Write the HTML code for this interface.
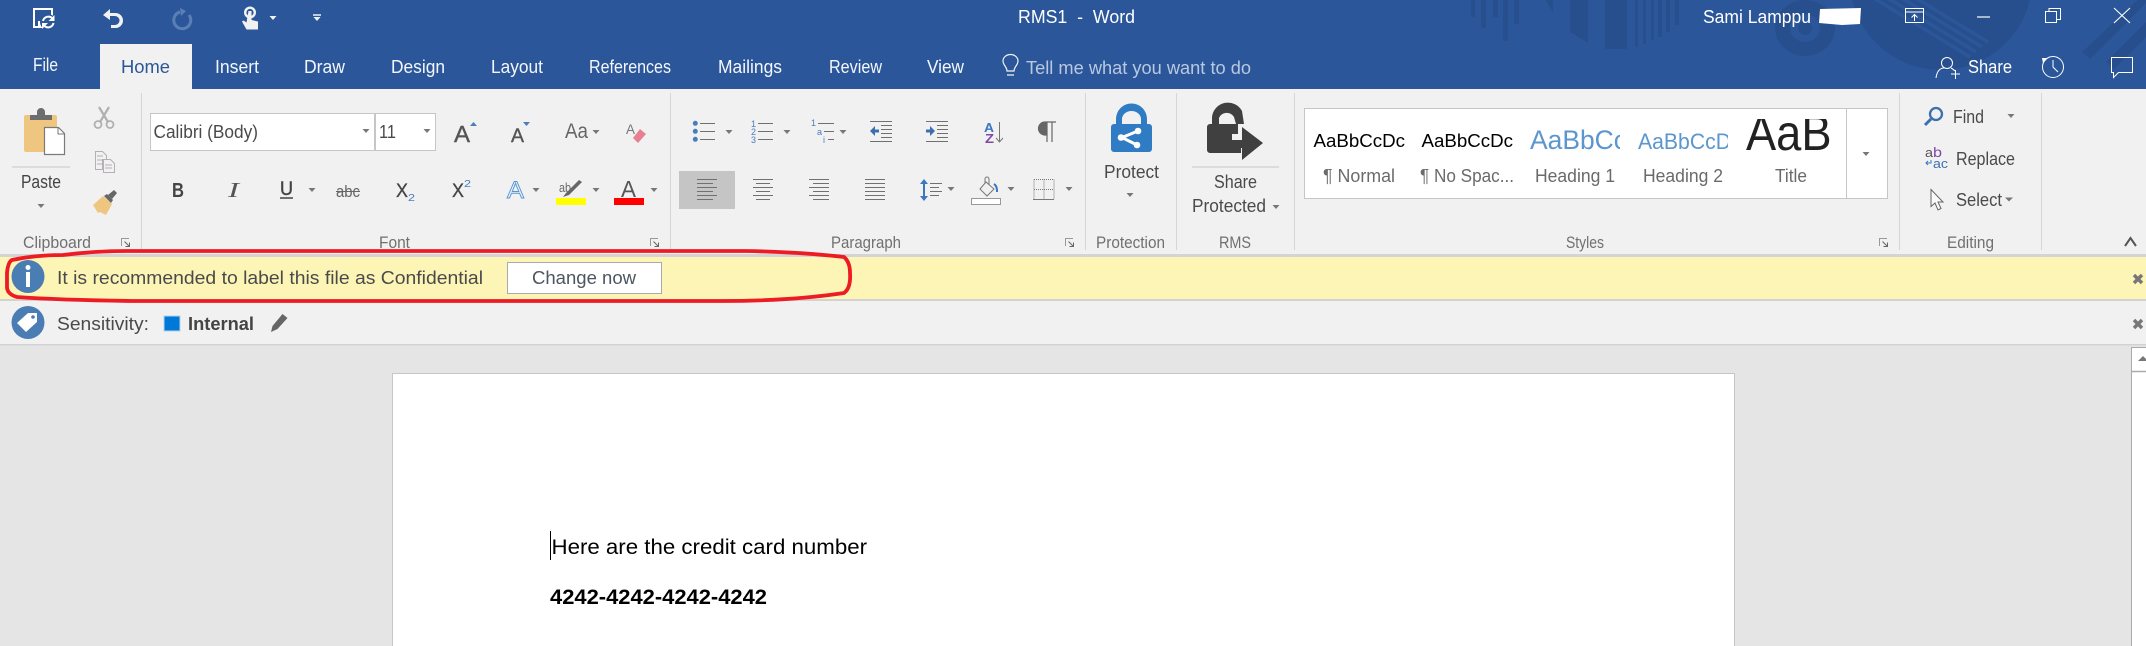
<!DOCTYPE html>
<html lang="en">
<head>
<meta charset="utf-8">
<title>RMS1 - Word</title>
<style>
html,body{margin:0;padding:0;width:2146px;height:646px;overflow:hidden;background:#e5e5e5}
svg{display:block}
text{font-family:"Liberation Sans",sans-serif;font-size:18px;fill:#4a4a4a;white-space:pre}
.w{fill:#fff}
.tab{fill:#f4f6fa}
.g{font-size:16.500px;fill:#707070}
.l{font-size:18px;fill:#6a6a6a}
.d{font-size:21.500px;fill:#000}
.ln{stroke:#707070;stroke-width:1;fill:none}
.bl{fill:#4a7ebb}
</style>
</head>
<body>
<svg xmlns="http://www.w3.org/2000/svg" width="2146" height="646" viewBox="0 0 2146 646">
<defs>
<path id="a" d="M-3.500-2h7L0 2z" fill="#777"/>
<path id="aw" d="M-3.500-2h7L0 2z" fill="#f1f1f1"/>
<g id="dl"><path d="M.5 8V.5H8" stroke="#999" fill="none"/><path d="M3.500 3.500L8 8M8.500 4.500v4h-4" stroke="#666" fill="none"/></g>
<clipPath id="cb"><rect x="0" y="0" width="2146" height="89"/></clipPath>
<clipPath id="cd"><circle cx="1941" cy="-21.600" r="91.600"/></clipPath>
<clipPath id="c1"><rect x="1528" y="112" width="92" height="60"/></clipPath>
<clipPath id="c2"><rect x="1636" y="112" width="92" height="60"/></clipPath>
<clipPath id="c3"><rect x="1740" y="119" width="100" height="50"/></clipPath>
</defs>

<rect width="2146" height="646" fill="#e5e5e5"/>
<!-- title bar -->
<rect width="2146" height="89" fill="#2b579a"/>
<g clip-path="url(#cb)" fill="#274f8d">
<path d="M1471 0h4v17h-4zM1481 0h5v28h-5zM1493 0h5v17h-5zM1503 0h5v41h-5zM1514 0h5v24h-5zM1546 0h7v13z"/>
<path d="M1570 0h18v43l-18-11zM1605 0h22v49h-22zM1635 0h3v47h-3zM1643 0h3v44h-3zM1651 0h3v40h-3zM1658 0h4v37h-4zM1666 0h4v32h-4zM1675 0h4v25h-4z"/>
<path fill-rule="evenodd" d="M1775 28a30 28 0 1 0 60 0a30 28 0 1 0-60 0zM1790 28a15 14 0 1 1 30 0a15 14 0 1 1-30 0z"/>
<circle cx="1805" cy="28" r="7"/>
<circle cx="1941" cy="-21.600" r="91.600"/>
<g clip-path="url(#cd)" stroke="#2b579a" stroke-width="3.500" fill="none">
<path d="M1872-3l98 60M1886-3l90 55M1900-3l82 50M1914-3l74 45"/>
</g>
<path d="M2082 52l8 7 56-56V-8zM2106 62l8 7 32-32V22z"/>
</g>
<!-- QAT -->
<path d="M34 9h18v18H34z" fill="none" stroke="#fff" stroke-width="2"/>
<path d="M38 21h6v6h-6z" fill="#fff"/>
<circle cx="48" cy="22" r="8" fill="#2b579a"/>
<path d="M43 21a5.500 5.500 0 0 1 9.500-2.500M53.500 23a5.500 5.500 0 0 1-9.500 2.500" fill="none" stroke="#fff" stroke-width="2"/>
<path d="M54.500 15v6h-6zM42 29v-6h6z" fill="#fff"/>
<path d="M103 15l7-6v4h5a7.500 7.500 0 0 1 1 15h-5v-3h4a4.500 4.500 0 0 0 0-9h-5v4z" fill="#f1f1f1"/>
<path d="M189 15a8.500 8.500 0 1 1-9-3" fill="none" stroke="#5a7fb6" stroke-width="3"/>
<path d="M180 8l1 8 5-5z" fill="#5a7fb6"/>
<circle cx="250" cy="12.500" r="4.800" fill="none" stroke="#f1f1f1" stroke-width="2.400"/>
<path d="M248.500 11h3v9l6.500 1.500v8h-11.500l-4.500-8 1.500-1 3 2z" fill="#f1f1f1"/>
<use href="#aw" x="273" y="18"/>
<path d="M313 15h8" stroke="#f1f1f1" stroke-width="1.500"/><use href="#aw" x="317" y="19"/>

<!-- title/right -->
<text class="w" x="1018" y="23" textLength="117" lengthAdjust="spacingAndGlyphs">RMS1  -  Word</text>
<text class="w" x="1703" y="23" textLength="108" lengthAdjust="spacingAndGlyphs">Sami Lamppu</text>
<path d="M1820 9l41-1-1 16-18 1-23-2z" fill="#fff"/>
<path d="M1905.500 8.500h18v14h-18zM1905.500 12h18M1914.500 21v-6M1911.500 17.500l3-3 3 3" fill="none" stroke="#fff"/>
<path d="M1977 17h13" stroke="#fff" stroke-width="1.200"/>
<path d="M2045.500 11.500h11v11h-11zM2049 11.500v-3h11.500v11h-4" fill="none" stroke="#fff"/>
<path d="M2114 8l16 15M2130 8l-16 15" stroke="#fff" stroke-width="1.100"/>
<circle cx="1947" cy="63" r="5.500" fill="none" stroke="#fff"/>
<path d="M1936 78c1-8 5-10 8-10M1951 68c2 1 3 2 4 3M1951 74h9M1955.500 70v9" fill="none" stroke="#fff"/>
<text class="w" x="1968" y="73" textLength="44" lengthAdjust="spacingAndGlyphs">Share</text>
<circle cx="2053" cy="67" r="10.500" fill="none" stroke="#fff"/>
<path d="M2053 60v7l5 5" fill="none" stroke="#fff"/><path d="M2042 58h6l-5 5z" fill="#fff"/>
<path d="M2111.500 57.500h21v15h-14l-5 5v-5h-2z" fill="none" stroke="#fff"/>

<!-- tabs -->
<rect x="100" y="44" width="92" height="45" fill="#f1f1f1"/>
<text class="tab" x="33" y="71" textLength="25" lengthAdjust="spacingAndGlyphs">File</text>
<text x="121" y="73" textLength="49" lengthAdjust="spacingAndGlyphs" style="fill:#2b579a">Home</text>
<text class="tab" x="215" y="73" textLength="44" lengthAdjust="spacingAndGlyphs">Insert</text>
<text class="tab" x="304" y="73" textLength="41" lengthAdjust="spacingAndGlyphs">Draw</text>
<text class="tab" x="391" y="73" textLength="54" lengthAdjust="spacingAndGlyphs">Design</text>
<text class="tab" x="491" y="73" textLength="52" lengthAdjust="spacingAndGlyphs">Layout</text>
<text class="tab" x="589" y="73" textLength="82" lengthAdjust="spacingAndGlyphs">References</text>
<text class="tab" x="718" y="73" textLength="64" lengthAdjust="spacingAndGlyphs">Mailings</text>
<text class="tab" x="829" y="73" textLength="53" lengthAdjust="spacingAndGlyphs">Review</text>
<text class="tab" x="927" y="73" textLength="37" lengthAdjust="spacingAndGlyphs">View</text>
<path d="M1007 71c0-4-4-6-4-10a7.500 6.500 0 0 1 15 0c0 4-4 6-4 10zM1007 75h7" fill="none" stroke="#f1f1f1" stroke-width="1.200"/>
<text x="1026" y="74" textLength="225" lengthAdjust="spacingAndGlyphs" style="fill:#b9c8e0">Tell me what you want to do</text>

<!-- ribbon -->
<rect y="89" width="2146" height="165" fill="#f1f1f1"/>
<rect y="254" width="2146" height="3" fill="#d4d4d4"/>
<path d="M141.500 93v157M670.500 93v157M1085.500 93v157M1176.500 93v157M1294.500 93v157M1899.500 93v157M2041.500 93v157" stroke="#d6d6d6"/>
<text class="g" x="23" y="248" textLength="68" lengthAdjust="spacingAndGlyphs">Clipboard</text>
<text class="g" x="379" y="248" textLength="31" lengthAdjust="spacingAndGlyphs">Font</text>
<text class="g" x="831" y="248" textLength="70" lengthAdjust="spacingAndGlyphs">Paragraph</text>
<text class="g" x="1096" y="248" textLength="69" lengthAdjust="spacingAndGlyphs">Protection</text>
<text class="g" x="1219" y="248" textLength="32" lengthAdjust="spacingAndGlyphs">RMS</text>
<text class="g" x="1566" y="248" textLength="38" lengthAdjust="spacingAndGlyphs">Styles</text>
<text class="g" x="1947" y="248" textLength="47" lengthAdjust="spacingAndGlyphs">Editing</text>
<use href="#dl" x="121" y="238"/><use href="#dl" x="650" y="238"/><use href="#dl" x="1065" y="238"/><use href="#dl" x="1879" y="238"/>
<path d="M2125 246l5.500-8 5.500 8" fill="none" stroke="#555" stroke-width="2"/>

<!-- clipboard -->
<rect x="24" y="115" width="33" height="37" rx="2" fill="#eec67f"/>
<path d="M30 120v-5h7v-3a3 3 0 0 1 8 0v3h7v5z" fill="#6d6d6d"/>
<path d="M44.500 127.500h14l6 6v21h-20z" fill="#fff" stroke="#7a7a7a" stroke-width="1.200"/>
<path d="M58 128v6h6" fill="none" stroke="#7a7a7a"/>
<path d="M12 167h58" stroke="#c6c6c6"/>
<text x="21" y="188" textLength="40" lengthAdjust="spacingAndGlyphs" style="fill:#444">Paste</text>
<use href="#a" x="41" y="206"/>
<circle cx="98" cy="124.500" r="3.500" fill="none" stroke="#b0b0b0" stroke-width="1.800"/>
<circle cx="110" cy="124.500" r="3.500" fill="none" stroke="#b0b0b0" stroke-width="1.800"/>
<path d="M100 122l9-15M108 122l-9-15" stroke="#b0b0b0" stroke-width="2.200"/>
<path d="M95.500 151.500h7l4 4v4h-4v10h-7zM103.500 159.500h7l4 4v9h-11z" fill="#f1f1f1" stroke="#b5b0b5"/>
<path d="M97 156h6M97 160h5M97 164h5M105 165h7M105 168h7" stroke="#b5b0b5"/>
<path d="M93 205l10-9 9 8-6 11-6-3-2 1z" fill="#eec67f"/>
<path d="M104 196l7 7 2-3-6-6z" fill="#666"/><path d="M108 195l6-5 3 3-5 6z" fill="#666"/>

<!-- font -->
<rect x="150.500" y="113.500" width="224" height="37" fill="#fff" stroke="#c6c6c6"/>
<rect x="375.500" y="113.500" width="60" height="37" fill="#fff" stroke="#c6c6c6"/>
<text x="153.500" y="138" textLength="104.500" lengthAdjust="spacingAndGlyphs">Calibri (Body)</text>
<use href="#a" x="366" y="131"/>
<text x="379" y="138" textLength="17" lengthAdjust="spacingAndGlyphs">11</text>
<use href="#a" x="427" y="131"/>
<text x="454" y="142" textLength="16" lengthAdjust="spacingAndGlyphs" style="font-size:23px;fill:#555;stroke:#555;stroke-width:.4">A</text>
<path d="M470 126l3.500-4 3.500 4z" fill="#4a7ebb"/>
<text x="511" y="142" textLength="13" lengthAdjust="spacingAndGlyphs" style="font-size:19px;fill:#555;stroke:#555;stroke-width:.4">A</text>
<path d="M523 122h7l-3.500 4z" fill="#4a7ebb"/>
<text x="565" y="138" textLength="23" lengthAdjust="spacingAndGlyphs" style="font-size:21px;fill:#666">Aa</text>
<use href="#a" x="596" y="132"/>
<text x="626" y="134" textLength="9" lengthAdjust="spacingAndGlyphs" style="font-size:14px;fill:#777">A</text>
<path d="M640 129l6 5-8 9-5-5z" fill="#e8818f"/>
<text x="172" y="197" textLength="12" lengthAdjust="spacingAndGlyphs" style="font-size:20px;font-weight:bold;fill:#444">B</text>
<text x="228" y="197" textLength="11" lengthAdjust="spacingAndGlyphs" style="font-family:'Liberation Serif',serif;font-style:italic;font-size:21px;fill:#555">I</text>
<text x="280" y="195" textLength="13" lengthAdjust="spacingAndGlyphs" style="font-size:19px;fill:#444;stroke:#444;stroke-width:.4">U</text>
<path d="M280 198h13" stroke="#444" stroke-width="1.500"/>
<use href="#a" x="312" y="190"/>
<text x="336" y="197" textLength="24" lengthAdjust="spacingAndGlyphs" style="font-size:17px;fill:#666">abc</text>
<path d="M336 191.500h24" stroke="#666"/>
<text x="396" y="197" textLength="12" lengthAdjust="spacingAndGlyphs" style="font-size:19px;fill:#444;stroke:#444;stroke-width:.3">X</text>
<text x="408" y="201" textLength="7" lengthAdjust="spacingAndGlyphs" style="font-size:10px;fill:#4a7ebb">2</text>
<text x="452" y="197" textLength="12" lengthAdjust="spacingAndGlyphs" style="font-size:19px;fill:#444;stroke:#444;stroke-width:.3">X</text>
<text x="464" y="187" textLength="7" lengthAdjust="spacingAndGlyphs" style="font-size:10px;fill:#4a7ebb">2</text>
<text x="507" y="198" textLength="17" lengthAdjust="spacingAndGlyphs" style="font-size:24px;fill:#eaf2fb;stroke:#5a94d0;stroke-width:.9">A</text>
<use href="#a" x="536" y="190"/>
<text x="559" y="192" textLength="12" lengthAdjust="spacingAndGlyphs" style="font-size:13px;fill:#666">ab</text>
<path d="M563 197l6-2 13-13-3-2-13 13z" fill="#666"/>
<rect x="556" y="198" width="30" height="7" fill="#ff0"/>
<use href="#a" x="596" y="190"/>
<text x="621" y="197" textLength="15" lengthAdjust="spacingAndGlyphs" style="font-size:23px;fill:#555">A</text>
<rect x="614" y="198" width="30" height="7" fill="#f00"/>
<use href="#a" x="654" y="190"/>

<!-- paragraph row 1 -->
<g class="bl"><circle cx="695.300" cy="123.300" r="2.500"/><circle cx="695.300" cy="131.300" r="2.500"/><circle cx="695.300" cy="139.300" r="2.500"/></g>
<path class="ln" d="M700 123.500h15M700 131.500h15M700 139.500h15M758 123.500h15M758 131.500h15M758 139.500h15M818 123.500h16M824 131.500h10M828 139.500h6"/>
<use href="#a" x="729" y="132"/><use href="#a" x="787" y="132"/><use href="#a" x="843" y="132"/>
<g><text x="751" y="127" style="font-size:9px;fill:#4a7ebb">1</text><text x="751" y="135" style="font-size:9px;fill:#4a7ebb">2</text><text x="751" y="143" style="font-size:9px;fill:#4a7ebb">3</text>
<text x="811" y="126" style="font-size:9px;fill:#4a7ebb">1</text><text x="817" y="135" style="font-size:9px;fill:#4a7ebb">a</text><text x="823" y="143" style="font-size:9px;fill:#4a7ebb">i</text></g>
<path class="ln" d="M870 121.500h22M881 125.500h11M881 129.500h11M881 133.500h11M881 137.500h11M870 141.500h22M926 121.500h22M937 125.500h11M937 129.500h11M937 133.500h11M937 137.500h11M926 141.500h22"/>
<path d="M870 131l5-5v3.500h4v3h-4v3.500zM935 131l-5-5v3.500h-4v3h4v3.500z" fill="#3a70b0"/>
<text x="984" y="132" textLength="10" lengthAdjust="spacingAndGlyphs" style="font-size:13px;font-weight:bold;fill:#3a78c0">A</text>
<text x="985" y="143" textLength="9" lengthAdjust="spacingAndGlyphs" style="font-size:13px;font-weight:bold;fill:#7d4aa8">Z</text>
<path d="M999.500 122v20M996 138l3.500 4 3.500-4" fill="none" stroke="#777"/>
<path d="M1047 122h-2a5.500 5.500 0 0 0 0 13h2zM1047 122v20M1052 122v20M1046 122h10" fill="#666" stroke="#666" stroke-width="1.200"/>

<!-- paragraph row 2 -->
<rect x="679" y="171" width="56" height="38" fill="#c5c5c5"/>
<path class="ln" d="M697 179.500h20M697 183.500h16M697 187.500h20M697 191.500h16M697 195.500h20M697 199.500h16M753 179.500h20M756 183.500h14M753 187.500h20M756 191.500h14M753 195.500h20M756 199.500h14M809 179.500h20M813 183.500h16M809 187.500h20M813 191.500h16M809 195.500h20M813 199.500h16M865 179.500h20M865 183.500h20M865 187.500h20M865 191.500h20M865 195.500h20M865 199.500h20M930 183.500h12M930 187.500h9M930 191.500h12M930 195.500h9"/>
<path d="M924 181v18" stroke="#3a78c0" stroke-width="2"/>
<path d="M920 184l4-5 4 5zM920 196l4 5 4-5z" fill="#3a78c0"/>
<use href="#a" x="951" y="189"/>
<path d="M986 182l8 7-7 7-7-7zM985 183v-4a2 2 0 0 1 4 0v6" fill="#f1f1f1" stroke="#777"/>
<path d="M994 184c3 2 3 5 3 8" fill="none" stroke="#3a78c0" stroke-width="2"/>
<rect x="971.500" y="198.500" width="29" height="6" fill="#fff" stroke="#999"/>
<use href="#a" x="1011" y="189"/>
<path d="M1034 179.500h20v20M1034 179.500v20M1044 179.500v20M1034 189.500h20" fill="none" stroke="#777" stroke-dasharray="1 1"/>
<path d="M1033 199.500h21" stroke="#777"/>
<use href="#a" x="1069" y="189"/>

<!-- protect -->
<path fill-rule="evenodd" d="M1111 127a3 3 0 0 1 3-3h2v-5a15 15 0 0 1 31 0v5h2a3 3 0 0 1 3 3v22a3 3 0 0 1-3 3h-35a3 3 0 0 1-3-3zM1122 124h19v-5a9.500 8 0 0 0-19 0z" fill="#2f7cc4"/>
<path d="M1138 131l-16 6.500 15 7.500" fill="none" stroke="#fff" stroke-width="3"/>
<circle cx="1138" cy="131" r="3.300" fill="#fff"/><circle cx="1121" cy="137.500" r="3.300" fill="#fff"/><circle cx="1137" cy="145" r="3.300" fill="#fff"/>
<text x="1104" y="178" textLength="55" lengthAdjust="spacingAndGlyphs">Protect</text>
<use href="#a" x="1130" y="195"/>
<!-- rms -->
<path fill-rule="evenodd" d="M1207 127a3 3 0 0 1 3-3h2v-7a16 16 0 0 1 30-6l2 13h-8l-2-7a8 7 0 0 0-15 1v6h19v10h-6v11h9v8h-31a3 3 0 0 1-3-3z" fill="#404040"/>
<path d="M1225 140h18v8h-18zM1242 127l21 16-21 17z" fill="#404040"/>
<path d="M1192 167h87" stroke="#c6c6c6"/>
<text x="1214" y="188" textLength="43" lengthAdjust="spacingAndGlyphs">Share</text>
<text x="1192" y="212" textLength="74" lengthAdjust="spacingAndGlyphs">Protected</text>
<path d="M1272.500 205h7l-3.500 4z" fill="#777"/>

<!-- styles -->
<rect x="1304.500" y="108.500" width="583" height="90" fill="#fff" stroke="#c6c6c6"/>
<path d="M1846.500 108v90" stroke="#c6c6c6"/>
<text x="1313.500" y="147" textLength="91.500" lengthAdjust="spacingAndGlyphs" style="font-size:18px;fill:#000">AaBbCcDc</text>
<text x="1421.500" y="147" textLength="91.500" lengthAdjust="spacingAndGlyphs" style="font-size:18px;fill:#000">AaBbCcDc</text>
<g clip-path="url(#c1)"><text x="1530" y="149" textLength="97" lengthAdjust="spacingAndGlyphs" style="font-size:27px;fill:#5b96cf">AaBbCc</text></g>
<g clip-path="url(#c2)"><text x="1638" y="149" textLength="93" lengthAdjust="spacingAndGlyphs" style="font-size:22px;fill:#5b96cf">AaBbCcD</text></g>
<g clip-path="url(#c3)"><text x="1746" y="150" textLength="85.500" lengthAdjust="spacingAndGlyphs" style="font-size:50px;fill:#222">AaB</text></g>
<text class="l" x="1323" y="182" textLength="72" lengthAdjust="spacingAndGlyphs">¶ Normal</text>
<text class="l" x="1420" y="182" textLength="94" lengthAdjust="spacingAndGlyphs">¶ No Spac...</text>
<text class="l" x="1535" y="182" textLength="80" lengthAdjust="spacingAndGlyphs">Heading 1</text>
<text class="l" x="1643" y="182" textLength="80" lengthAdjust="spacingAndGlyphs">Heading 2</text>
<text class="l" x="1775" y="182" textLength="32" lengthAdjust="spacingAndGlyphs">Title</text>
<use href="#a" x="1866" y="154"/>

<!-- editing -->
<circle cx="1936" cy="114" r="6" fill="none" stroke="#3a70b0" stroke-width="2.300"/>
<path d="M1931 119l-6 6" stroke="#3a70b0" stroke-width="3"/>
<text x="1953" y="123" textLength="31" lengthAdjust="spacingAndGlyphs">Find</text>
<use href="#a" x="2011" y="116"/>
<text x="1925" y="157" textLength="8" lengthAdjust="spacingAndGlyphs" style="font-size:13px;fill:#555">a</text>
<text x="1933" y="157" textLength="9" lengthAdjust="spacingAndGlyphs" style="font-size:14px;fill:#7d4aa8">b</text>
<text x="1933" y="168" textLength="15" lengthAdjust="spacingAndGlyphs" style="font-size:13px;fill:#3a70b0">ac</text>
<path d="M1931 160v3h-5M1928 161l-2 2 2 2" fill="none" stroke="#3a78c0"/>
<text x="1956" y="165" textLength="59" lengthAdjust="spacingAndGlyphs">Replace</text>
<path d="M1931 189.500v17l4-3.500 3 7 3-1.500-3-6.500h5z" fill="#fafafa" stroke="#666"/>
<text x="1956" y="206" textLength="46" lengthAdjust="spacingAndGlyphs">Select</text>
<path d="M2005 197.500h8l-4 4z" fill="#777"/>

<!-- message bar -->
<rect y="257" width="2146" height="42" fill="#fdf5b5"/>
<rect y="299" width="2146" height="2" fill="#d2d2d2"/>
<circle cx="28" cy="276.500" r="16.500" fill="#4a7db4"/>
<circle cx="28" cy="267.500" r="2.500" fill="#fff"/>
<rect x="26" y="272" width="4" height="15" fill="#fff"/>
<text x="57" y="284" textLength="426" lengthAdjust="spacingAndGlyphs">It is recommended to label this file as Confidential</text>
<rect x="507.500" y="262.500" width="154" height="31" fill="#fff" stroke="#aaa"/>
<text x="532" y="284" textLength="104" lengthAdjust="spacingAndGlyphs" style="fill:#4c5560">Change now</text>
<path d="M2134 275l8 8M2142 275l-8 8" stroke="#777" stroke-width="3.400"/>

<!-- sensitivity -->
<rect y="301" width="2146" height="43" fill="#f1f1f1"/>
<rect y="344" width="2146" height="1.500" fill="#d2d2d2"/>
<circle cx="28" cy="322.500" r="16.500" fill="#4a7db4"/>
<path d="M17 323l11-10h9v9l-11 10z" fill="#fff"/>
<circle cx="33" cy="317" r="1.800" fill="#4a7db4"/>
<text x="57" y="330" textLength="92" lengthAdjust="spacingAndGlyphs">Sensitivity:</text>
<rect x="164" y="316" width="16" height="15" fill="#0078d7" stroke="#b7d3ee"/>
<text x="188" y="330" textLength="66" lengthAdjust="spacingAndGlyphs" style="font-weight:bold;fill:#444">Internal</text>
<path d="M271 332l1.500-6 10-12 5 4-10 11z" fill="#666"/>
<path d="M2134 320l8 8M2142 320l-8 8" stroke="#777" stroke-width="3.400"/>

<!-- page -->
<rect x="392.500" y="373.500" width="1342" height="280" fill="#fff" stroke="#c6c6c6"/>
<path d="M550.500 531v29" stroke="#000"/>
<text class="d" x="551.500" y="554" textLength="315.500" lengthAdjust="spacingAndGlyphs">Here are the credit card number</text>
<text class="d" x="550" y="604" textLength="217" lengthAdjust="spacingAndGlyphs" style="font-weight:bold">4242-4242-4242-4242</text>

<!-- scrollbar -->
<rect x="2131.500" y="347.500" width="16" height="310" fill="#fff" stroke="#aaa"/>
<path d="M2131 371.500h15" stroke="#aaa" stroke-width="1.500"/>
<path d="M2138 361l5-5 5 5z" fill="#777"/>

<!-- red highlight -->
<path d="M7 273Q8 262 12 260Q35 255 63 255Q95 251 126 251H746Q800 252 844 257Q850 262 850 273Q851 288 844 293Q790 301 723 301H132Q60 300 17 297Q7 294 7 287Z" fill="none" stroke="#ed1c24" stroke-width="3.800"/>
</svg>
</body>
</html>
